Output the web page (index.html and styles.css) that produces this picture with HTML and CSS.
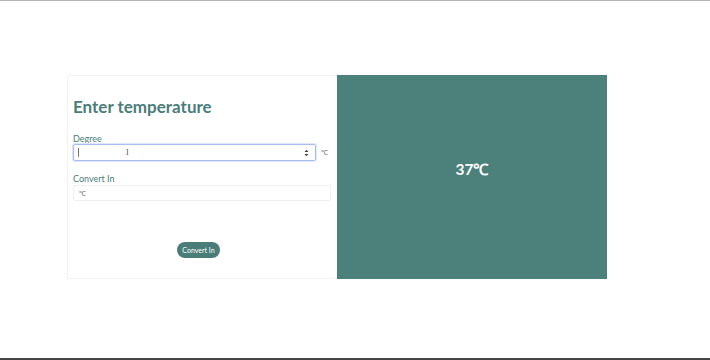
FILE: index.html
```html
<!DOCTYPE html>
<html lang="en">
<head>
<meta charset="utf-8">
<title>Temperature Converter</title>
<link rel="stylesheet" href="styles.css">
</head>
<body>
<div class="page">
  <div class="card">
    <div class="form-side">
      <h1 class="title">Enter temperature</h1>
      <label class="label" for="degree">Degree</label>
      <div class="input-row">
        <div class="input focus">
          <span class="caret"></span>
          <span class="ibeam">I</span>
          <span class="spinner">
            <svg width="5" height="8" viewBox="0 0 5 8"><path d="M0.5 3 L2.5 0.8 L4.5 3 Z M0.5 5 L2.5 7.2 L4.5 5 Z" fill="#444"/></svg>
          </span>
        </div>
        <span class="unit">℃</span>
      </div>
      <label class="label label-2">Convert In</label>
      <div class="select">℃</div>
      <div class="btn-wrap">
        <button class="btn">Convert In</button>
      </div>
    </div>
    <div class="result-side">
      <span class="result">37℃</span>
    </div>
  </div>
</div>
</body>
</html>
```

FILE: styles.css
```css
html, body {
  margin: 0;
  padding: 0;
  background: #ffffff;
}
body {
  font-family: Lato, "Open Sans", sans-serif;
}
.page {
  box-sizing: border-box;
  width: 710px;
  height: 360px;
  border-top: 1px solid #b3b3b3;
  border-bottom: 2px solid #454545;
  padding: 74px 0 0 67px;
}
.card {
  display: flex;
  width: 540px;
  height: 204px;
}
.form-side {
  box-sizing: border-box;
  width: 270px;
  border: 1px solid #f2f2f2;
  border-right: none;
  padding: 19px 6px 0 5px;
  display: flex;
  flex-direction: column;
}
.title {
  margin: 0;
  font-size: 17px;
  font-weight: 700;
  color: #4a7d78;
  line-height: 24px;
}
.label {
  display: block;
  margin-top: 14px;
  font-size: 9px;
  line-height: 11px;
  color: #4a7d78;
  font-weight: 400;
}
.label-2 {
  margin-top: 12px;
}
.input-row {
  display: flex;
  align-items: center;
}
.input {
  position: relative;
  box-sizing: border-box;
  width: 243px;
  height: 17px;
  border-radius: 2px;
  display: flex;
  align-items: center;
  padding: 0 6px 0 4px;
}
.input.focus {
  border: 1.5px solid #a9bdf0;
  box-shadow: 0 0 0 1px #dfe7fb;
}
.caret {
  width: 1px;
  height: 9px;
  background: #777;
}
.ibeam {
  margin-left: 47px;
  font-family: "Liberation Serif", serif;
  font-size: 8px;
  color: #555;
}
.spinner {
  margin-left: auto;
  display: flex;
}
.unit {
  margin-left: 5px;
  font-size: 7px;
  color: #666;
}
.select {
  box-sizing: border-box;
  width: 258px;
  height: 16px;
  margin-top: 1px;
  border: 1px solid #f0f0f0;
  border-radius: 2px;
  font-size: 7px;
  line-height: 14px;
  padding-left: 5px;
  color: #666;
}
.btn-wrap {
  display: flex;
  justify-content: center;
  margin-top: 41px;
  padding-right: 7px;
}
.btn {
  border: none;
  background: #4a7d78;
  color: #ffffff;
  font-family: Lato, "Open Sans", sans-serif;
  font-size: 7px;
  height: 16px;
  padding: 0 5px;
  border-radius: 8px;
}
.result-side {
  width: 270px;
  background: #4b807b;
  display: flex;
  align-items: center;
  justify-content: center;
}
.result {
  color: #ffffff;
  font-size: 15.5px;
  font-weight: 700;
  margin-top: -16px;
}
```
